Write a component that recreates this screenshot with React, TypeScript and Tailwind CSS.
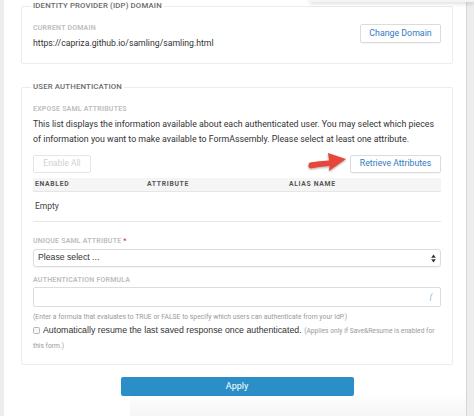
import React from "react";

const label = "text-[7px] leading-[10px] font-semibold uppercase tracking-[0.03em] text-[#bdbdbd]";

export default function App() {
  return (
    <div className="relative w-[474px] h-[416px] overflow-hidden bg-[#ededed]" style={{ fontFamily: "Roboto, 'Liberation Sans', sans-serif" }}>
      <div className="ml-[4px] w-[463px] h-[416px] bg-white border-r border-[#d6d6d6] pl-[17px] pr-[13px]">
        <fieldset className="border border-[#ececec] rounded-[2px] px-[11px] pb-[13px]">
          <legend className="px-[2px] ml-[-2px] text-[7.8px] leading-[12px] font-medium uppercase tracking-[0.02em] text-[#6a6a6a]">
            Identity Provider (IdP) Domain
          </legend>
          <div className="flex items-start justify-between pt-[11px]">
            <div>
              <div className={label}>Current Domain</div>
              <div className="mt-[3px] text-[8.7px] leading-[14px] text-[#333]">https://capriza.github.io/samling/samling.html</div>
            </div>
            <button className="mt-[1px] h-[19px] w-[81px] border border-[#dcdcdc] rounded-[2px] bg-white text-[8.8px] text-[#2f7bbf] shadow-[0_1px_1px_rgba(0,0,0,0.04)]">
              Change Domain
            </button>
          </div>
        </fieldset>

        <fieldset className="mt-[17px] border border-[#ececec] rounded-[2px] px-[11px] pb-[11px]">
          <legend className="px-[2px] ml-[-2px] text-[7.8px] leading-[12px] font-medium uppercase tracking-[0.02em] text-[#6a6a6a]">
            User Authentication
          </legend>
          <div className={`${label} mt-[11px]`}>Expose SAML Attributes</div>
          <p className="mt-[2.5px] text-[8.8px] leading-[15px] text-[#333]">
            This list displays the information available about each authenticated user. You may select which pieces of information you want to make available to FormAssembly. Please select at least one attribute.
          </p>
          <div className="mt-[8px] flex items-center justify-between relative">
            <button className="h-[18px] w-[58px] border border-[#e6e6e6] rounded-[2px] bg-white text-[8.5px] text-[#d2d2d2]">Enable All</button>
            <button className="h-[18px] w-[91px] border border-[#dcdcdc] rounded-[2px] bg-white text-[8.7px] text-[#2f7bbf] shadow-[0_1px_1px_rgba(0,0,0,0.04)]">
              Retrieve Attributes
            </button>
            <svg className="absolute left-[274px] top-[-4px]" width="42" height="24" viewBox="0 0 42 24">
              <defs>
                <filter id="sh" x="-20%" y="-20%" width="140%" height="160%">
                  <feDropShadow dx="0" dy="1" stdDeviation="0.8" floodColor="#000" floodOpacity="0.35" />
                </filter>
              </defs>
              <path d="M3 11.5 Q 12 10 22 9.5 L 21 2 L 39 8 L 22 20 L 22.5 15 Q 12 15.5 3.5 17.5 Q 1 16.5 1.5 14 Q 1.5 12 3 11.5 Z" fill="#e5463a" filter="url(#sh)" />
            </svg>
          </div>
          <div className="mt-[5px] grid grid-cols-[112px_142px_1fr] h-[14px] items-center bg-[#f5f5f5] border-b border-[#e6e6e6] pl-[2px] text-[6.8px] font-bold tracking-[0.1em] text-[#555]">
            <div>ENABLED</div>
            <div>ATTRIBUTE</div>
            <div>ALIAS NAME</div>
          </div>
          <div className="h-[30px] flex items-center pl-[2px] border-b border-[#e6e6e6] text-[8.5px] text-[#444]">Empty</div>
          <div className={`${label} mt-[14px]`}>
            Unique SAML Attribute <span className="text-[#e0443a]">*</span>
          </div>
          <div className="mt-[3.5px] h-[18px] flex items-center justify-between border border-[#dcdcdc] rounded-[3px] pl-[4px] pr-[4px] shadow-[0_1px_1px_rgba(0,0,0,0.05)]">
            <span className="text-[8.7px] text-[#333]" style={{ fontFamily: "'Liberation Sans', Arial, sans-serif" }}>Please select ...</span>
            <svg width="5" height="9" viewBox="0 0 5 9">
              <path d="M2.5 0.5 L4.8 3.7 H0.2 Z" fill="#333" />
              <path d="M2.5 8.5 L4.8 5.3 H0.2 Z" fill="#333" />
            </svg>
          </div>
          <div className={`${label} mt-[8px]`}>Authentication Formula</div>
          <div className="mt-[2px] h-[20px] flex items-center justify-end border border-[#dcdcdc] rounded-[2px] pr-[8px]">
            <span className="text-[8px] italic text-[#7fb3de]" style={{ fontFamily: "'Liberation Serif', serif" }}>f</span>
          </div>
          <div className="mt-[5px] text-[6.8px] leading-[10px] text-[#9a9a9a]">
            (Enter a formula that evaluates to TRUE or FALSE to specify which users can authenticate from your IdP.)
          </div>
          <div className="mt-[1px] text-[8.8px] leading-[14px] text-[#333]" style={{ fontFamily: "'Liberation Sans', Arial, sans-serif" }}>
            <span className="inline-block w-[7px] h-[7px] border border-[#b5b5b5] rounded-[1.5px] bg-[#f7f7f7] mr-[3px] align-[-0.5px]"></span>
            <span className="leading-[14px]">Automatically resume the last saved response once authenticated.</span>{" "}
            <span className="text-[6.7px] leading-[14px] text-[#9a9a9a]" style={{ fontFamily: "Roboto, sans-serif" }}>(Applies only if Save&amp;Resume is enabled for this form.)</span>
          </div>
        </fieldset>

        <div className="mt-[12px] flex justify-center">
          <button className="h-[19px] w-[233px] rounded-[2px] bg-[#2b8fc7] text-[9px] text-white">Apply</button>
        </div>
      </div>

      <div className="absolute right-0 top-[-20px] w-[164px] h-[22px] bg-[#f4f4f4] shadow-[0_2px_4px_rgba(0,0,0,0.12)]"></div>
      <div className="absolute left-[130px] right-[8px] bottom-0 h-[24px] bg-gradient-to-b from-transparent to-[rgba(0,0,0,0.04)]"></div>
    </div>
  );
}
